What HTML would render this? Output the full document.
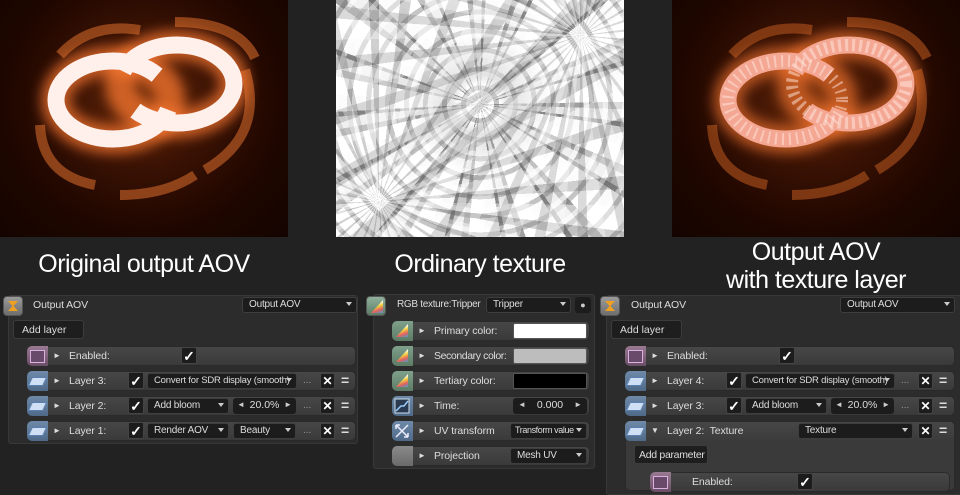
<!DOCTYPE html>
<html><head><meta charset="utf-8">
<style>
*{box-sizing:border-box;margin:0;padding:0}
body{width:960px;height:480px;background:#222;position:relative;overflow:hidden;font-family:"Liberation Sans",sans-serif;font-size:10.5px;color:#ddd}
.a{position:absolute}
.cap{position:absolute;color:#fff;font-size:25px;text-align:center;white-space:nowrap;letter-spacing:-0.5px}
.panel{position:absolute;background:#2c2c2c;border:1px solid #383838;border-radius:3px}
.row{position:absolute;height:20px;background:linear-gradient(#474747,#3a3a3a);border-radius:5px;border:1px solid #2a2a2a}
.tile{position:absolute;width:21px;height:20px;top:-1px;left:-1px;border-radius:5px 0 0 5px;background:linear-gradient(#8a8e94,#6a6e74)}
.tile.g{background:linear-gradient(#7fa08a,#5c7c66)}
.tile.b{background:linear-gradient(#6e8aa8,#4e6a88)}
.tile.p{background:linear-gradient(#9a7a92,#6a4e66)}
.tile.n{background:linear-gradient(#8a8a8a,#6a6a6a)}
.arr{position:absolute;top:4px;font-size:8px;color:#ddd}
.lbl{position:absolute;top:3px;color:#ddd;font-size:10.5px;white-space:nowrap;letter-spacing:-0.1px}
.dd{position:absolute;height:16px;background:#1c1c1c;border:1px solid #3e3e3e;border-radius:3px;color:#ddd;padding:1px 10px 0 6px;font-size:10px;white-space:nowrap;overflow:hidden;letter-spacing:-0.2px}
.dd:after{content:"";position:absolute;right:4px;bottom:3px;border:3px solid transparent;border-top:4px solid #ccc}
.chk{position:absolute;width:16px;height:17px;background:#1c1c1c;border:1px solid #444;border-radius:2px;color:#fff;font-size:14px;line-height:16px;text-align:center;font-weight:bold}
.x{position:absolute;width:15px;height:16px;background:#1c1c1c;border:1px solid #444;border-radius:2px;color:#fff;font-size:12px;font-weight:bold;line-height:14px;text-align:center}
.eq{position:absolute;color:#ddd;font-size:14px;font-weight:bold}
.dots{position:absolute;color:#999;font-size:10px}
.btn{position:absolute;height:19px;background:#1e1e1e;border:1px solid #3c3c3c;border-radius:3px;color:#ddd;font-size:10.5px;padding:3px 0 0 8px;white-space:nowrap}
.sp{position:absolute;height:16px;background:#1c1c1c;border-radius:3px;color:#ddd;font-size:10.5px;text-align:center;padding-top:1px}
.sp i{position:absolute;top:2px;font-style:normal;font-size:8px;color:#ccc}
.hico{position:absolute;width:20px;height:20px;border-radius:4px;background:linear-gradient(#9a9a9a,#6e6e6e);border:1px solid #555}
.hico:after{content:"";position:absolute;left:4px;top:4px;width:10px;height:10px;background:#f0a020;clip-path:polygon(0 0,100% 0,55% 50%,100% 100%,0 100%,45% 50%)}
.tx:after{content:"";position:absolute;left:4px;top:3px;width:12px;height:13px;background:linear-gradient(160deg,#fff 30%,#f3d040 50%,#e06060 75%,#4aa0d0);clip-path:polygon(0 100%,100% 0,100% 100%)}
.ly:after{content:"";position:absolute;left:3px;top:6px;width:13px;height:7px;background:#cfe0f4;border:1px solid #5a7fb0;transform:skewX(-25deg)}
.en:after{content:"";position:absolute;left:3px;top:4px;width:13px;height:11px;border:1px solid #d9b0e0;background:#6a4a6a}
.sw{position:absolute;height:16px;border:1px solid #555;border-radius:2px}
</style></head><body>

<svg width="0" height="0" style="position:absolute"><defs><filter id="gl" x="-50%" y="-50%" width="200%" height="200%"><feGaussianBlur stdDeviation="6"/></filter></defs></svg>

<div class="a" style="left:0;top:0;width:288px;height:237px;background:radial-gradient(ellipse at 50% 42%,#6a2a0a 0%,#3a1204 35%,#200700 65%,#140400 100%)">
<svg width="288" height="237" style="position:absolute;left:0;top:0">
<g fill="none">
<path d="M60 55 Q90 22 140 30 M245 70 Q265 135 205 170 M40 125 Q42 175 95 185 M175 22 Q238 22 255 58 M120 195 Q165 195 195 175" stroke="#b85a24" stroke-width="10" opacity="0.7"/>
<ellipse cx="113" cy="100" rx="57" ry="39" stroke="#ff7a30" stroke-width="30" filter="url(#gl)" opacity="0.7"/>
<ellipse cx="177" cy="84" rx="57" ry="39" stroke="#ff7a30" stroke-width="30" filter="url(#gl)" opacity="0.7"/>
<ellipse cx="113" cy="100" rx="57" ry="39" stroke="#fff0ec" stroke-width="17" stroke-dasharray="265 45" stroke-dashoffset="-10"/>
<ellipse cx="177" cy="84" rx="57" ry="39" stroke="#fff0ec" stroke-width="17" stroke-dasharray="265 45" stroke-dashoffset="-165"/>
</g></svg></div>

<div class="a" style="left:336px;top:0;width:288px;height:237px;background:#d8d8d8;overflow:hidden">
<div class="a" style="inset:0;background:repeating-conic-gradient(from 10deg at 50% 44%,#fff 0deg 7deg,#a0a0a0 7deg 10deg,#e8e8e8 10deg 15deg,#888 15deg 17deg,#fafafa 17deg 24deg)"></div>
<div class="a" style="inset:0;background:repeating-radial-gradient(circle at 50% 44%,rgba(255,255,255,.0) 0 9px,rgba(255,255,255,.6) 9px 14px,rgba(110,110,110,.4) 14px 19px)"></div>
<div class="a" style="inset:0;background:repeating-conic-gradient(from 0deg at 15% 85%,rgba(255,255,255,.45) 0 6deg,rgba(100,100,100,.3) 6deg 9deg,rgba(255,255,255,0) 9deg 13deg)"></div>
<div class="a" style="inset:0;background:repeating-conic-gradient(from 5deg at 85% 15%,rgba(255,255,255,.35) 0 5deg,rgba(110,110,110,.25) 5deg 8deg,rgba(255,255,255,0) 8deg 12deg)"></div>
<div class="a" style="inset:0;background:radial-gradient(circle at 50% 44%,rgba(120,120,120,.0) 0 20px,rgba(150,150,150,.25) 30px,rgba(0,0,0,0) 70px)"></div>
</div>

<div class="a" style="left:672px;top:0;width:288px;height:237px;background:radial-gradient(ellipse at 50% 42%,#6a2a0a 0%,#3a1204 35%,#200700 65%,#140400 100%)">
<svg width="288" height="237" style="position:absolute;left:0;top:0">
<g fill="none">
<path d="M60 55 Q90 22 140 30 M245 70 Q265 135 205 170 M40 125 Q42 175 95 185 M175 22 Q238 22 255 58 M120 195 Q165 195 195 175" stroke="#a04a1a" stroke-width="10" opacity="0.7"/>
<ellipse cx="113" cy="100" rx="57" ry="39" stroke="#ff7a30" stroke-width="30" filter="url(#gl)" opacity="0.6"/>
<ellipse cx="177" cy="84" rx="57" ry="39" stroke="#ff7a30" stroke-width="30" filter="url(#gl)" opacity="0.6"/>
<ellipse cx="113" cy="100" rx="57" ry="39" stroke="#f4a894" stroke-width="17" stroke-dasharray="265 45" stroke-dashoffset="-10"/>
<ellipse cx="177" cy="84" rx="57" ry="39" stroke="#f4a894" stroke-width="17" stroke-dasharray="265 45" stroke-dashoffset="-165"/>
<ellipse cx="113" cy="100" rx="57" ry="39" stroke="#ffe8e0" stroke-width="12" stroke-dasharray="2 5" opacity="0.5"/>
<ellipse cx="177" cy="84" rx="57" ry="39" stroke="#ffe8e0" stroke-width="12" stroke-dasharray="3 4" opacity="0.5"/>
</g></svg></div>

<div class="cap" style="left:0;width:288px;top:250px">Original output AOV</div>
<div class="cap" style="left:336px;width:288px;top:250px">Ordinary texture</div>
<div class="cap" style="left:672px;width:288px;top:238px;line-height:28px">Output AOV<br>with texture layer</div>

<!-- Left panel -->
<div class="panel" style="left:8px;top:295px;width:350px;height:149px"></div>
<div class="hico" style="left:3px;top:296px"></div>
<div class="lbl" style="left:33px;top:299px">Output AOV</div>
<div class="dd" style="left:242px;top:297px;width:115px">Output AOV</div>
<div class="btn" style="left:13px;top:320px;width:71px">Add layer</div>

<div class="row" style="left:27px;top:346px;width:329px"><div class="tile p en"></div><span class="arr" style="left:25px">►</span><span class="lbl" style="left:41px">Enabled:</span><div class="chk" style="left:153px;top:0">✓</div></div>
<div class="row" style="left:27px;top:371px;width:329px"><div class="tile b ly"></div><span class="arr" style="left:25px">►</span><span class="lbl" style="left:41px">Layer 3:</span><div class="chk" style="left:100px;top:0">✓</div><div class="dd" style="left:119px;top:1px;width:150px;font-size:9.5px">Convert for SDR display (smooth)</div><span class="dots" style="left:275px;top:3px">...</span><div class="x" style="left:292px;top:1px">✕</div><span class="eq" style="left:313px;top:0">=</span></div>
<div class="row" style="left:27px;top:396px;width:329px"><div class="tile b ly"></div><span class="arr" style="left:25px">►</span><span class="lbl" style="left:41px">Layer 2:</span><div class="chk" style="left:100px;top:0">✓</div><div class="dd" style="left:119px;top:1px;width:82px">Add bloom</div><div class="sp" style="left:205px;top:1px;width:63px"><i style="left:4px">◄</i>20.0%<i style="right:4px">►</i></div><span class="dots" style="left:275px;top:3px">...</span><div class="x" style="left:292px;top:1px">✕</div><span class="eq" style="left:313px;top:0">=</span></div>
<div class="row" style="left:27px;top:421px;width:329px"><div class="tile b ly"></div><span class="arr" style="left:25px">►</span><span class="lbl" style="left:41px">Layer 1:</span><div class="chk" style="left:100px;top:0">✓</div><div class="dd" style="left:119px;top:1px;width:82px">Render AOV</div><div class="dd" style="left:205px;top:1px;width:63px">Beauty</div><span class="dots" style="left:275px;top:3px">...</span><div class="x" style="left:292px;top:1px">✕</div><span class="eq" style="left:313px;top:0">=</span></div>

<!-- Center panel -->
<div class="panel" style="left:373px;top:294px;width:222px;height:175px"></div>
<div class="hico tx" style="left:366px;top:296px;background:linear-gradient(#8fb09a,#5c7c66)"></div>
<div class="lbl" style="left:397px;top:299px;font-size:10px;letter-spacing:-0.3px">RGB texture:Tripper</div>
<div class="dd" style="left:486px;top:297px;width:85px">Tripper</div>
<div class="a" style="left:575px;top:297px;width:16px;height:16px;background:#1c1c1c;border-radius:3px;color:#ccc;font-size:9px;text-align:center;line-height:16px">●</div>

<div class="row" style="left:392px;top:321px;width:198px"><div class="tile g tx"></div><span class="arr" style="left:25px">►</span><span class="lbl" style="left:41px">Primary color:</span><div class="sw" style="left:120px;top:1px;width:74px;background:#fff"></div></div>
<div class="row" style="left:392px;top:346px;width:198px"><div class="tile g tx"></div><span class="arr" style="left:25px">►</span><span class="lbl" style="left:41px;letter-spacing:-0.4px">Secondary color:</span><div class="sw" style="left:120px;top:1px;width:74px;background:#bdbdbd"></div></div>
<div class="row" style="left:392px;top:371px;width:198px"><div class="tile g tx"></div><span class="arr" style="left:25px">►</span><span class="lbl" style="left:41px">Tertiary color:</span><div class="sw" style="left:120px;top:1px;width:74px;background:#000"></div></div>
<div class="row" style="left:392px;top:396px;width:198px"><div class="tile b"><svg width="20" height="20"><rect x="3" y="3" width="14" height="14" fill="#2a3a50" stroke="#cde"/><path d="M4 15 L9 10 L12 10 L16 5" stroke="#9cf" fill="none" stroke-width="1.5"/></svg></div><span class="arr" style="left:25px">►</span><span class="lbl" style="left:41px">Time:</span><div class="sp" style="left:120px;top:1px;width:74px"><i style="left:5px">◄</i>0.000<i style="right:5px">►</i></div></div>
<div class="row" style="left:392px;top:421px;width:198px"><div class="tile b"><svg width="20" height="20"><path d="M4 4 L16 16 M16 4 L4 16 M4 4 h4 M4 4 v4 M16 16 h-4 M16 16 v-4" stroke="#eef" stroke-width="1.5" fill="none"/></svg></div><span class="arr" style="left:25px">►</span><span class="lbl" style="left:41px">UV transform</span><div class="dd" style="left:117px;top:1px;width:77px;font-size:9px;letter-spacing:-0.4px;padding-left:4px">Transform value</div></div>
<div class="row" style="left:392px;top:446px;width:198px"><div class="tile n"></div><span class="arr" style="left:25px">►</span><span class="lbl" style="left:41px">Projection</span><div class="dd" style="left:117px;top:1px;width:77px">Mesh UV</div></div>

<!-- Right panel -->
<div class="panel" style="left:606px;top:295px;width:360px;height:200px"></div>
<div class="hico" style="left:600px;top:296px"></div>
<div class="lbl" style="left:631px;top:299px">Output AOV</div>
<div class="dd" style="left:840px;top:297px;width:115px">Output AOV</div>
<div class="btn" style="left:611px;top:320px;width:71px">Add layer</div>

<div class="row" style="left:625px;top:346px;width:330px"><div class="tile p en"></div><span class="arr" style="left:25px">►</span><span class="lbl" style="left:41px">Enabled:</span><div class="chk" style="left:153px;top:0">✓</div></div>
<div class="row" style="left:625px;top:371px;width:330px"><div class="tile b ly"></div><span class="arr" style="left:25px">►</span><span class="lbl" style="left:41px">Layer 4:</span><div class="chk" style="left:100px;top:0">✓</div><div class="dd" style="left:119px;top:1px;width:150px;font-size:9.5px">Convert for SDR display (smooth)</div><span class="dots" style="left:275px;top:3px">...</span><div class="x" style="left:292px;top:1px">✕</div><span class="eq" style="left:313px;top:0">=</span></div>
<div class="row" style="left:625px;top:396px;width:330px"><div class="tile b ly"></div><span class="arr" style="left:25px">►</span><span class="lbl" style="left:41px">Layer 3:</span><div class="chk" style="left:100px;top:0">✓</div><div class="dd" style="left:119px;top:1px;width:82px">Add bloom</div><div class="sp" style="left:205px;top:1px;width:63px"><i style="left:4px">◄</i>20.0%<i style="right:4px">►</i></div><span class="dots" style="left:275px;top:3px">...</span><div class="x" style="left:292px;top:1px">✕</div><span class="eq" style="left:313px;top:0">=</span></div>
<div class="row" style="left:625px;top:421px;width:330px;height:70px;background:linear-gradient(#474747,#3a3a3a 20px,#3a3a3a)"><div class="tile b ly"></div><span class="arr" style="left:25px">▼</span><span class="lbl" style="left:41px">Layer 2:&nbsp; Texture</span><div class="dd" style="left:172px;top:1px;width:115px">Texture</div><div class="x" style="left:292px;top:1px">✕</div><span class="eq" style="left:313px;top:0">=</span></div>
<div class="btn" style="left:634px;top:445px;width:74px;padding-left:4px;letter-spacing:-0.3px">Add parameter</div>
<div class="row" style="left:650px;top:472px;width:300px"><div class="tile p en"></div><span class="lbl" style="left:41px">Enabled:</span><div class="chk" style="left:146px;top:0">✓</div></div>

</body></html>
